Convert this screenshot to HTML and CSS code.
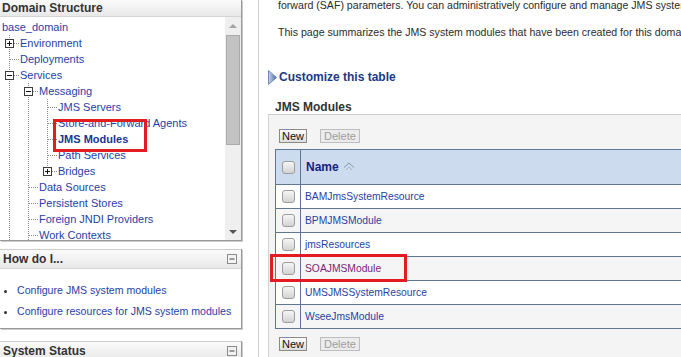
FILE: index.html
```html
<!DOCTYPE html>
<html lang="en">
<head>
  <meta charset="UTF-8" />
  <title>JMS Modules</title>
  <link rel="stylesheet" href="styles.css">
</head>
<body>

<div class="page">

  <aside class="sidebar">

    <div class="panel domain">
      <div class="panel-head">Domain Structure</div>
      <div class="tree-wrap">
        <ul class="tree">
          <li class="row"><a class="root">base_domain</a></li>
          <li class="row"><span class="g tee"><svg class="exp" width="9" height="9"><rect x="0.5" y="0.5" width="8" height="8"/><path d="M2 4.5h5M4.5 2v5"/></svg></span><a>Environment</a></li>
          <li class="row"><span class="g tee"></span><a>Deployments</a></li>
          <li class="row"><span class="g tee"><svg class="exp" width="9" height="9"><rect x="0.5" y="0.5" width="8" height="8"/><path d="M2 4.5h5"/></svg></span><a>Services</a></li>
          <li class="row"><span class="g pipe"></span><span class="g tee"><svg class="exp" width="9" height="9"><rect x="0.5" y="0.5" width="8" height="8"/><path d="M2 4.5h5"/></svg></span><a>Messaging</a></li>
          <li class="row"><span class="g pipe"></span><span class="g pipe"></span><span class="g tee"></span><a>JMS Servers</a></li>
          <li class="row"><span class="g pipe"></span><span class="g pipe"></span><span class="g tee"></span><a>Store-and-Forward Agents</a></li>
          <li class="row"><span class="g pipe"></span><span class="g pipe"></span><span class="g tee"></span><a class="current">JMS Modules</a></li>
          <li class="row"><span class="g pipe"></span><span class="g pipe"></span><span class="g tee"></span><a>Path Services</a></li>
          <li class="row"><span class="g pipe"></span><span class="g pipe"></span><span class="g elbow"><svg class="exp" width="9" height="9"><rect x="0.5" y="0.5" width="8" height="8"/><path d="M2 4.5h5M4.5 2v5"/></svg></span><a>Bridges</a></li>
          <li class="row"><span class="g pipe"></span><span class="g tee"></span><a>Data Sources</a></li>
          <li class="row"><span class="g pipe"></span><span class="g tee"></span><a>Persistent Stores</a></li>
          <li class="row"><span class="g pipe"></span><span class="g tee"></span><a>Foreign JNDI Providers</a></li>
          <li class="row"><span class="g pipe"></span><span class="g tee"></span><a>Work Contexts</a></li>
        </ul>
        <div class="scrollbar">
          <div class="sb-btn"><span class="arrow-up"></span></div>
          <div class="sb-thumb"></div>
          <div class="sb-btn down"><span class="arrow-down"></span></div>
        </div>
      </div>
    </div>

    <div class="panel howdo">
      <div class="panel-head bordered">How do I...<svg class="toggle" width="10" height="10"><rect x="0.5" y="0.5" width="9" height="9"/><path d="M2.5 5h5"/></svg></div>
      <ul class="help">
        <li><a>Configure JMS system modules</a></li>
        <li><a>Configure resources for JMS system modules</a></li>
      </ul>
    </div>

    <div class="panel status">
      <div class="panel-head bordered">System Status<svg class="toggle" width="10" height="10"><rect x="0.5" y="0.5" width="9" height="9"/><path d="M2.5 5h5"/></svg></div>
    </div>

  </aside>

  <main class="main">
    <p class="intro">forward (SAF) parameters. You can administratively configure and manage JMS system modules as global resources.</p>
    <p class="intro">This page summarizes the JMS system modules that have been created for this domain.</p>

    <a class="customize">
      <svg width="9" height="15"><defs><linearGradient id="tri" x1="0" y1="0" x2="1" y2="0"><stop offset="0" stop-color="#c9d5ec"/><stop offset="1" stop-color="#4d67a3"/></linearGradient></defs><polygon points="0.5,0.5 8.5,7.5 0.5,14.5" fill="url(#tri)" stroke="#7388b4"/></svg>
      Customize this table
    </a>

    <h2 class="table-title">JMS Modules</h2>

    <div class="table-box">
      <div class="actions">
        <button class="btn">New</button>
        <button class="btn" disabled>Delete</button>
      </div>
      <table class="grid">
        <tr class="head">
          <th class="chk"><span class="box"></span></th>
          <th class="name">Name <svg width="12" height="9"><path d="M1 5.5L6 1l5 4.5" fill="none" stroke="#7f93b8"/><path d="M3 8l3-3 3 3" fill="none" stroke="#9fb0cf"/></svg></th>
        </tr>
        <tr><td class="chk"><span class="box"></span></td><td><a>BAMJmsSystemResource</a></td></tr>
        <tr class="alt"><td class="chk"><span class="box"></span></td><td><a>BPMJMSModule</a></td></tr>
        <tr><td class="chk"><span class="box"></span></td><td><a>jmsResources</a></td></tr>
        <tr class="alt"><td class="chk"><span class="box"></span></td><td><a class="visited">SOAJMSModule</a></td></tr>
        <tr><td class="chk"><span class="box"></span></td><td><a>UMSJMSSystemResource</a></td></tr>
        <tr class="alt"><td class="chk"><span class="box"></span></td><td><a>WseeJmsModule</a></td></tr>
      </table>
      <div class="actions bottom">
        <button class="btn">New</button>
        <button class="btn" disabled>Delete</button>
      </div>
    </div>
  </main>

  <div class="mark mark-tree"></div>
  <div class="mark mark-row"></div>

</div>

</body>
</html>
```

FILE: styles.css
```css
body {
  margin: 0;
  font-family: "Liberation Sans", Arial, sans-serif;
  font-size: 11px;
  color: #333;
  background: #fff;
  overflow: hidden;
}
a {
  color: #1f3fa6;
  text-decoration: none;
}
.page {
  position: relative;
  display: flex;
  height: 357px;
  overflow: hidden;
}

/* left column */
.sidebar {
  width: 243px;
  flex: none;
}
.panel {
  width: 242px;
  box-sizing: border-box;
  background: #fff;
  border-right: 1px solid #9a9a9a;
  border-bottom: 1px solid #9a9a9a;
  box-shadow: 1px 1px 0 #cacaca;
}
.panel-head {
  display: flex;
  align-items: center;
  justify-content: space-between;
  height: 16px;
  padding: 0 3px 0 2px;
  border-bottom: 1px solid #d4d4d4;
  background: linear-gradient(#fbfbfb, #e8e8e8);
  font-size: 12px;
  font-weight: bold;
  color: #333;
}
.panel-head.bordered {
  height: 18px;
  padding: 0 4px 0 3px;
  border-top: 1px solid #cdcdcd;
}
.toggle rect {
  fill: #f2f2f2;
  stroke: #8c8c8c;
}
.toggle path {
  stroke: #444;
}

.tree-wrap {
  display: flex;
  height: 223px;
}
.tree {
  flex: 1;
  margin: 0;
  padding: 2px 0 0;
  list-style: none;
  overflow: hidden;
}
.row {
  display: flex;
  height: 16px;
  line-height: 16px;
  white-space: nowrap;
}
.row a {
  padding-left: 1px;
}
.row .root {
  padding-left: 2px;
}
.row .current {
  font-weight: bold;
  color: #1a3594;
}
.g {
  display: flex;
  align-items: center;
  width: 19px;
  height: 16px;
  flex: none;
  background-repeat: no-repeat;
}
.pipe {
  background-image: repeating-linear-gradient(#8a8a8a 0 1px, transparent 1px 2px);
  background-size: 1px 16px;
  background-position: 9px 0;
}
.tee {
  background-image: repeating-linear-gradient(#8a8a8a 0 1px, transparent 1px 2px),
    repeating-linear-gradient(90deg, #8a8a8a 0 1px, transparent 1px 2px);
  background-size: 1px 16px, 9px 1px;
  background-position: 9px 0, 10px 8px;
}
.elbow {
  background-image: repeating-linear-gradient(#8a8a8a 0 1px, transparent 1px 2px),
    repeating-linear-gradient(90deg, #8a8a8a 0 1px, transparent 1px 2px);
  background-size: 1px 8px, 9px 1px;
  background-position: 9px 0, 10px 8px;
}
.exp {
  margin-left: 5px;
}
.exp rect {
  fill: #fff;
  stroke: #3c3c3c;
}
.exp path {
  stroke: #111;
}

.scrollbar {
  display: flex;
  flex-direction: column;
  width: 16px;
  flex: none;
  background: #efefef;
}
.sb-btn {
  display: flex;
  align-items: center;
  justify-content: center;
  height: 17px;
}
.sb-btn.down {
  margin-top: auto;
}
.arrow-up {
  border: 4px solid transparent;
  border-top: 0;
  border-bottom: 4px solid #a3a3a3;
}
.arrow-down {
  border: 4px solid transparent;
  border-bottom: 0;
  border-top: 4px solid #555;
}
.sb-thumb {
  height: 110px;
  margin: 1px 1px 0;
  background: #c3c3c3;
  border: 1px solid #aaa;
  box-sizing: border-box;
}

.howdo {
  margin-top: 8px;
}
.help {
  margin: 0;
  padding: 11px 0 6px 17px;
  font-size: 10.6px;
  line-height: 21px;
}
.status {
  margin-top: 12px;
  height: 40px;
}

/* right side */
.main {
  flex: 1;
  min-width: 0;
  margin-left: 15px;
  padding-left: 9px;
  border-left: 1px solid #cbcbcb;
}
.intro {
  margin: 0 0 13px;
  padding-left: 10px;
  font-size: 10.6px;
  line-height: 14px;
  color: #2b2b2b;
  white-space: nowrap;
}
.intro:first-child {
  margin-top: -2px;
}
.customize {
  display: flex;
  align-items: center;
  gap: 2px;
  margin-top: 30px;
  height: 16px;
  font-size: 12px;
  font-weight: bold;
  color: #1c3a86;
}
.table-title {
  margin: 15px 0 0;
  padding-left: 7px;
  font-size: 12px;
  line-height: 14px;
  color: #333;
}
.table-box {
  height: 260px;
  margin-right: -40px;
  padding: 14px 0 0 6px;
  background: #f4f4f4;
  border-top: 1px solid #cfcfcf;
  border-left: 1px solid #d2d2d2;
}
.actions {
  display: flex;
  gap: 13px;
  padding-left: 4px;
}
.actions.bottom {
  margin-top: 8px;
}
.btn {
  height: 14px;
  padding: 0 2px;
  font-family: inherit;
  font-size: 11px;
  line-height: 12px;
  color: #111;
  background: linear-gradient(#fdfdfd, #dedede);
  border: 1px solid #8a8a8a;
  border-radius: 0;
}
.btn:disabled {
  padding: 0 3px;
  color: #9c9c9c;
  background: #ececec;
  border-color: #bdbdbd;
}
.grid {
  width: 480px;
  margin-top: 6px;
  border-collapse: separate;
  border-spacing: 0;
  border-top: 1px solid #5e7596;
  border-left: 1px solid #5e7596;
  background: #fff;
}
.grid td, .grid th {
  box-sizing: border-box;
  height: 24px;
  padding: 0 0 0 4px;
  border-right: 1px solid #5e7596;
  border-bottom: 1px solid #5e7596;
  font-size: 10.3px;
  text-align: left;
  vertical-align: middle;
}
.grid .head th {
  height: 35px;
  background: #cddbee;
}
.grid th.name {
  padding-left: 5px;
  font-size: 12px;
  color: #17217c;
}
.grid th.name svg {
  margin-left: 1px;
}
.grid .chk {
  width: 25px;
  padding: 0 0 0 6px;
}
.grid .alt td {
  background: #f5f5f5;
}
.box {
  display: block;
  width: 13px;
  height: 13px;
  box-sizing: border-box;
  border: 1px solid #9d9d9d;
  border-radius: 3px;
  background: linear-gradient(#f6f6f6, #d3d3d3);
}
.grid a.visited {
  color: #7b1f77;
}

/* red highlight marks drawn over the screenshot */
.mark {
  position: absolute;
  box-sizing: border-box;
  border: 3px solid #e31b23;
}
.mark-tree {
  left: 53px;
  top: 119px;
  width: 94px;
  height: 33px;
}
.mark-row {
  left: 270px;
  top: 254px;
  width: 137px;
  height: 28px;
}
```
